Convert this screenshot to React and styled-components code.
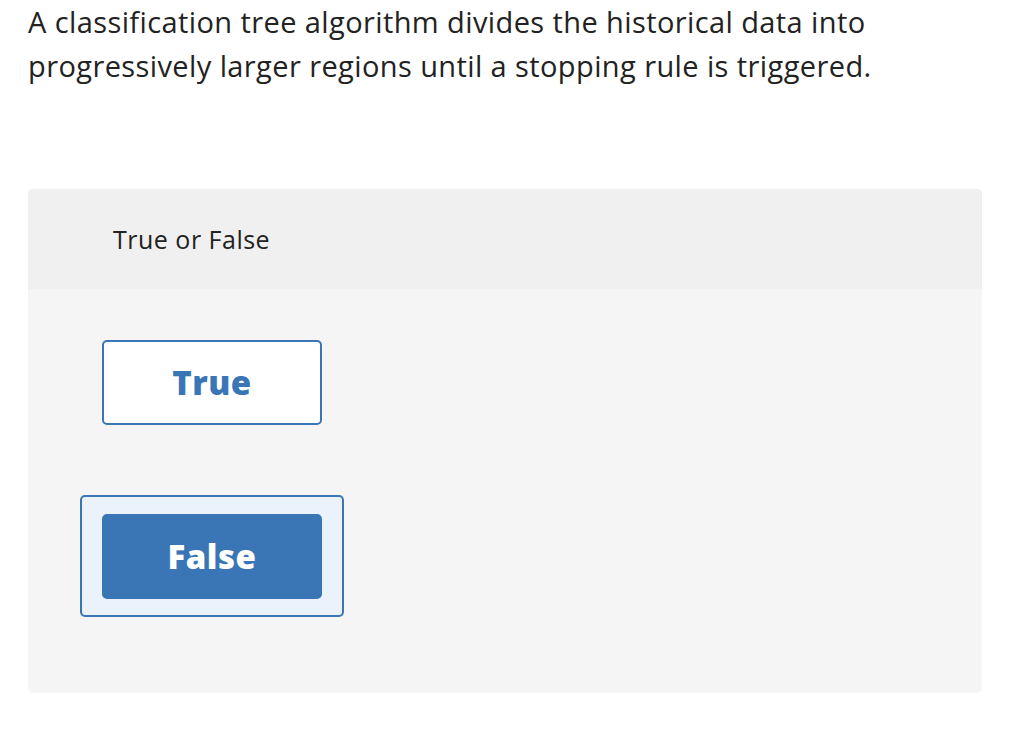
import React, { useState } from "react";
import styled, { createGlobalStyle } from "styled-components";

const GlobalStyle = createGlobalStyle`
    body {
        margin: 0;
        background: #ffffff;
        font-family: "Open Sans", "Lato", sans-serif;
        color: #222222;
    }
`

const Page = styled.div`
    padding: 0 28px;
    width: 954px;
`

const Prompt = styled.p`
    margin: 0;
    max-width: 900px;
    font-size: 29px;
    line-height: 44px;
    letter-spacing: 0.4px;
    color: #222222;
`

const Panel = styled.div`
    margin-top: 101px;
    border-radius: 5px;
    overflow: hidden;
    background: #f5f5f5;
`

const PanelHeader = styled.div`
    height: 100px;
    background: #f0f0f0;
    display: flex;
    align-items: center;
    padding-left: 85px;
    font-size: 25px;
    letter-spacing: 0.5px;
    color: #222222;
`

const Options = styled.div`
    display: flex;
    flex-direction: column;
    align-items: flex-start;
    gap: 52px;
    padding: 32px 0 76px 52px;
`

const OptionFrame = styled.div`
    width: 260px;
    height: 118px;
    border: 2px solid ${p => (p.selected ? "#3a76b6" : "transparent")};
    background: ${p => (p.selected ? "#eaf2fb" : "transparent")};
    border-radius: 5px;
    display: flex;
    align-items: center;
    justify-content: center;
`

const ChoiceButton = styled.button`
    width: 220px;
    height: 85px;
    border-radius: 5px;
    border: 2px solid #3a76b6;
    background: ${p => (p.selected ? "#3a76b6" : "#ffffff")};
    color: ${p => (p.selected ? "#ffffff" : "#3a76b6")};
    font-family: "Open Sans", "Lato", sans-serif;
    font-weight: 800;
    font-size: 33px;
    letter-spacing: 0.5px;
    cursor: pointer;
    padding: 0;
`

const choices = ["True", "False"];

export default function App() {
    const [answer, setAnswer] = useState("False");

    return (
        <Page>
            <GlobalStyle />
            <Prompt>
                A classification tree algorithm divides the historical data into progressively larger regions until a stopping rule is triggered.
            </Prompt>
            <Panel>
                <PanelHeader>True or False</PanelHeader>
                <Options>
                    {choices.map(c => (
                        <OptionFrame key={c} selected={answer === c}>
                            <ChoiceButton type="button" selected={answer === c} onClick={() => setAnswer(c)}>
                                {c}
                            </ChoiceButton>
                        </OptionFrame>
                    ))}
                </Options>
            </Panel>
        </Page>
    );
}
